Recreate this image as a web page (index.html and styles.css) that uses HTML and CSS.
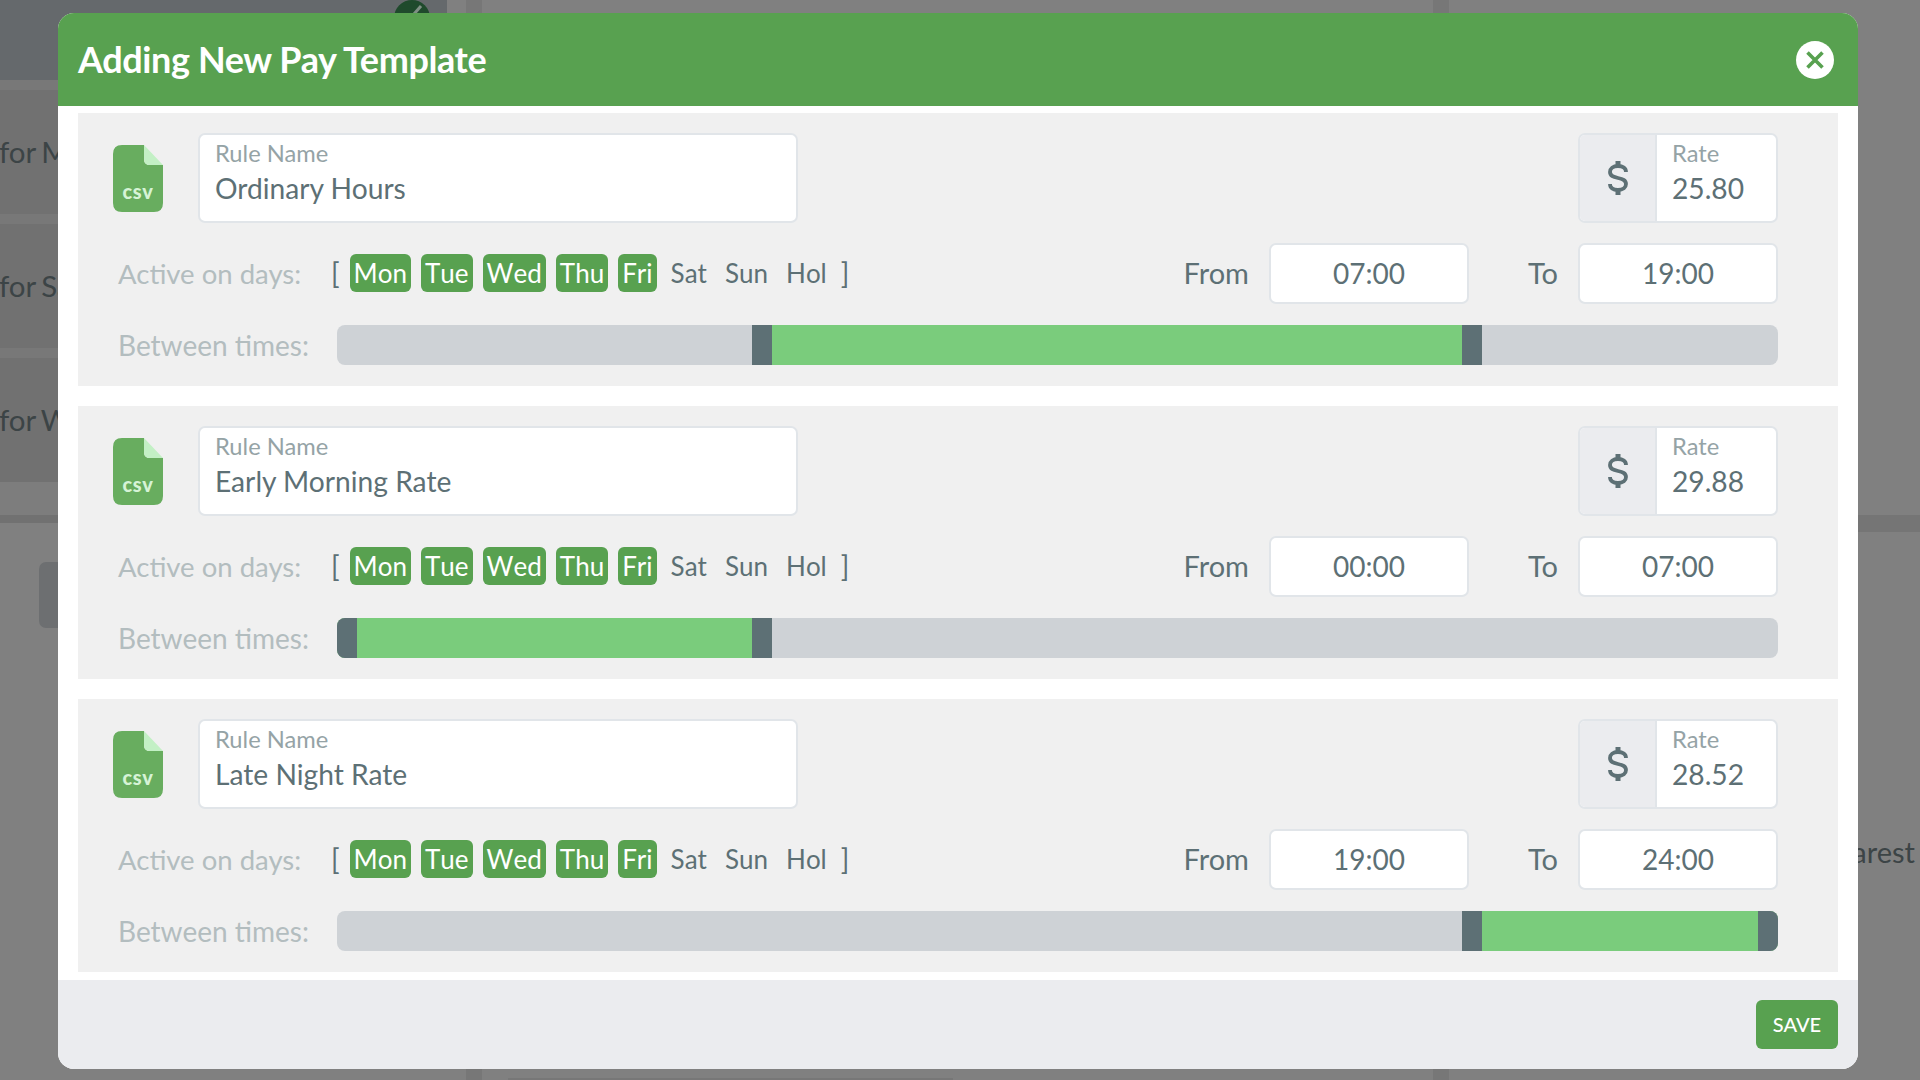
FILE: index.html
```html
<!DOCTYPE html>
<html lang="en">
<head>
  <meta charset="UTF-8" />
  <title>Adding New Pay Template</title>
  <link rel="stylesheet" href="styles.css">
</head>
<body>
  <div class="page-behind">
    <div class="behind-left">
      <div class="behind-top">
        <svg class="behind-badge" width="36" height="36" viewBox="0 0 36 36"><circle cx="18" cy="18" r="18" /><path d="M20 14 27 6" /></svg>
      </div>
      <div class="behind-sep"></div>
      <div class="behind-row">for Mon</div>
      <div class="behind-sep"></div>
      <div class="behind-row">for Sat</div>
      <div class="behind-sep"></div>
      <div class="behind-row">for Wed</div>
      <div class="behind-sep tall"></div>
      <div class="behind-line"></div>
    </div>
    <div class="behind-col c1"></div>
    <div class="behind-col c2"></div>
    <div class="behind-line right"></div>
    <div class="behind-box small"></div>
    <div class="behind-box wide"></div>
    <span class="behind-text">nearest</span>
  </div>

  <div class="modal">
    <div class="modal-header">
      <h1>Adding New Pay Template</h1>
      <div class="close-btn">
        <svg width="18" height="18" viewBox="0 0 18 18"><path d="M1.500 1.500 16.500 16.500M16.500 1.500 1.500 16.500" /></svg>
      </div>
    </div>

    <div class="modal-body">
      <div class="rule-card">
        <div class="row top-row">
          <svg class="csv-icon" width="50" height="67" viewBox="0 0 50 67">
            <path class="csv-sheet" d="M9 0H31V14Q31 20 37 20H50V58Q50 67 41 67H9Q0 67 0 58V9Q0 0 9 0Z" />
            <path class="csv-fold" d="M31 0 50 20H37Q31 20 31 14Z" />
            <text x="25" y="54" text-anchor="middle">csv</text>
          </svg>
          <div class="field name-field">
            <label>Rule Name</label>
            <div class="value">Ordinary Hours</div>
          </div>
          <div class="rate-group">
            <div class="addon">
              <svg width="24" height="36" viewBox="0 0 24 36"><path class="dollar-s" d="M20 12C20 8 17 6 12 6C7 6 4 8.500 4 12C4 16 7.500 17 12 18C16.500 19 20 20 20 24C20 27.500 17 30 12 30C7 30 4 28 4 24" /><path class="dollar-bar" d="M12 1V6M12 30V35" /></svg>
            </div>
            <div class="rate-input">
              <label>Rate</label>
              <div class="value">25.80</div>
            </div>
          </div>
        </div>
        <div class="row days-row">
          <span class="row-label active-label">Active on days:</span>
          <div class="days">
            <span class="bracket open">[</span>
            <span class="day on">Mon</span>
            <span class="day on">Tue</span>
            <span class="day on">Wed</span>
            <span class="day on">Thu</span>
            <span class="day on">Fri</span>
            <span class="day">Sat</span>
            <span class="day">Sun</span>
            <span class="day">Hol</span>
            <span class="bracket close">]</span>
          </div>
          <span class="time-label from-label">From</span>
          <div class="time-input">07:00</div>
          <span class="time-label to-label">To</span>
          <div class="time-input">19:00</div>
        </div>
        <div class="row times-row">
          <span class="row-label between-label">Between times:</span>
          <div class="time-bar"><div class="time-fill" style="--from: 7; --to: 19"></div></div>
        </div>
      </div>

      <div class="rule-card">
        <div class="row top-row">
          <svg class="csv-icon" width="50" height="67" viewBox="0 0 50 67">
            <path class="csv-sheet" d="M9 0H31V14Q31 20 37 20H50V58Q50 67 41 67H9Q0 67 0 58V9Q0 0 9 0Z" />
            <path class="csv-fold" d="M31 0 50 20H37Q31 20 31 14Z" />
            <text x="25" y="54" text-anchor="middle">csv</text>
          </svg>
          <div class="field name-field">
            <label>Rule Name</label>
            <div class="value">Early Morning Rate</div>
          </div>
          <div class="rate-group">
            <div class="addon">
              <svg width="24" height="36" viewBox="0 0 24 36"><path class="dollar-s" d="M20 12C20 8 17 6 12 6C7 6 4 8.500 4 12C4 16 7.500 17 12 18C16.500 19 20 20 20 24C20 27.500 17 30 12 30C7 30 4 28 4 24" /><path class="dollar-bar" d="M12 1V6M12 30V35" /></svg>
            </div>
            <div class="rate-input">
              <label>Rate</label>
              <div class="value">29.88</div>
            </div>
          </div>
        </div>
        <div class="row days-row">
          <span class="row-label active-label">Active on days:</span>
          <div class="days">
            <span class="bracket open">[</span>
            <span class="day on">Mon</span>
            <span class="day on">Tue</span>
            <span class="day on">Wed</span>
            <span class="day on">Thu</span>
            <span class="day on">Fri</span>
            <span class="day">Sat</span>
            <span class="day">Sun</span>
            <span class="day">Hol</span>
            <span class="bracket close">]</span>
          </div>
          <span class="time-label from-label">From</span>
          <div class="time-input">00:00</div>
          <span class="time-label to-label">To</span>
          <div class="time-input">07:00</div>
        </div>
        <div class="row times-row">
          <span class="row-label between-label">Between times:</span>
          <div class="time-bar"><div class="time-fill" style="--from: 0; --to: 7"></div></div>
        </div>
      </div>

      <div class="rule-card">
        <div class="row top-row">
          <svg class="csv-icon" width="50" height="67" viewBox="0 0 50 67">
            <path class="csv-sheet" d="M9 0H31V14Q31 20 37 20H50V58Q50 67 41 67H9Q0 67 0 58V9Q0 0 9 0Z" />
            <path class="csv-fold" d="M31 0 50 20H37Q31 20 31 14Z" />
            <text x="25" y="54" text-anchor="middle">csv</text>
          </svg>
          <div class="field name-field">
            <label>Rule Name</label>
            <div class="value">Late Night Rate</div>
          </div>
          <div class="rate-group">
            <div class="addon">
              <svg width="24" height="36" viewBox="0 0 24 36"><path class="dollar-s" d="M20 12C20 8 17 6 12 6C7 6 4 8.500 4 12C4 16 7.500 17 12 18C16.500 19 20 20 20 24C20 27.500 17 30 12 30C7 30 4 28 4 24" /><path class="dollar-bar" d="M12 1V6M12 30V35" /></svg>
            </div>
            <div class="rate-input">
              <label>Rate</label>
              <div class="value">28.52</div>
            </div>
          </div>
        </div>
        <div class="row days-row">
          <span class="row-label active-label">Active on days:</span>
          <div class="days">
            <span class="bracket open">[</span>
            <span class="day on">Mon</span>
            <span class="day on">Tue</span>
            <span class="day on">Wed</span>
            <span class="day on">Thu</span>
            <span class="day on">Fri</span>
            <span class="day">Sat</span>
            <span class="day">Sun</span>
            <span class="day">Hol</span>
            <span class="bracket close">]</span>
          </div>
          <span class="time-label from-label">From</span>
          <div class="time-input">19:00</div>
          <span class="time-label to-label">To</span>
          <div class="time-input">24:00</div>
        </div>
        <div class="row times-row">
          <span class="row-label between-label">Between times:</span>
          <div class="time-bar"><div class="time-fill" style="--from: 19; --to: 24"></div></div>
        </div>
      </div>
    </div>

    <div class="modal-footer">
      <button type="button" class="save-btn">SAVE</button>
    </div>
  </div>
</body>
</html>
```

FILE: styles.css
```css
:root {
  --verde: #58a150;
  --verde-claro: #7acc7c;
  --cinza-texto: #5d7075;
  --cinza-label: #95a3a6;
  --cinza-fraco: #b3bdbf;
  --cinza-borda: #e1e5e9;
  --cinza-rodape: #ebecef;
  --fundo-linha: #777777;
}

html, body {
  height: 100%;
}

body {
  margin: 0;
  overflow: hidden;
  position: relative;
  background-color: #808080;
  font-family: 'Lato', sans-serif;
  color: var(--cinza-texto);
}

/* page dimmed behind the modal */
.page-behind {
  position: absolute;
  inset: 0;
}

.behind-left {
  width: 447px;
  display: flex;
  flex-direction: column;
}

.behind-top {
  height: 80px;
  overflow: hidden;
  background-color: #65696c;
  display: flex;
  justify-content: flex-end;
  padding-right: 17px;
}

.behind-badge circle { fill: #1f4a2c; }

.behind-badge path {
  fill: none;
  stroke: #7f8f84;
  stroke-width: 3;
}

.behind-sep {
  height: 10px;
  background-color: #787878;
}

.behind-sep.tall {
  height: 33px;
  background-color: #7d7d7d;
}

.behind-row {
  height: 124px;
  box-sizing: border-box;
  padding-top: 44px;
  margin-left: -1px;
  background-color: #717171;
  font-size: 29.5px;
  line-height: 36px;
  word-spacing: -2px;
  color: #3c4446;
  white-space: nowrap;
}

.behind-line {
  height: 8px;
  background-color: #717171;
}

.behind-line.right {
  position: absolute;
  left: 1858px;
  right: 0;
  top: 515px;
  height: 17px;
  background-color: #757575;
}

.behind-col {
  position: absolute;
  top: 0;
  bottom: 0;
  width: 16px;
  background-color: var(--fundo-linha);
}

.c1 { left: 466px; }
.c2 { left: 1433px; }

.behind-box {
  position: absolute;
  background-color: var(--fundo-linha);
}

.behind-box.small {
  left: 39px;
  top: 562px;
  width: 40px;
  height: 66px;
  border-radius: 7px;
  background-color: #6d6f71;
}

.behind-box.wide {
  left: 508px;
  top: 1078px;
  width: 445px;
  height: 20px;
}

.behind-text {
  position: absolute;
  right: 5px;
  top: 834px;
  font-size: 29px;
  color: #3c4446;
  white-space: nowrap;
}

.modal {
  position: absolute;
  left: 58px;
  top: 13px;
  width: 1800px;
  height: 1056px;
  display: flex;
  flex-direction: column;
  background-color: white;
  border-radius: 16px;
  overflow: hidden;
}

.modal-header {
  height: 93px;
  box-sizing: border-box;
  padding: 0 24px 0 20px;
  display: flex;
  justify-content: space-between;
  align-items: center;
  background-color: var(--verde);
  color: white;
}

.modal-header h1 {
  margin: 0 0 2px;
  font-size: 36px;
  font-weight: 700;
  letter-spacing: -0.4px;
}

.close-btn {
  width: 38px;
  height: 38px;
  border-radius: 50%;
  background-color: white;
  display: flex;
  justify-content: center;
  align-items: center;
}

.close-btn svg path {
  fill: none;
  stroke: var(--verde);
  stroke-width: 3.6;
}

.modal-body {
  flex: 1;
  padding: 7px 20px 8px;
  display: flex;
  flex-direction: column;
  gap: 20px;
}

.rule-card {
  height: 273px;
  box-sizing: border-box;
  padding: 20px 60px 21px 35px;
  background-color: #f0f0f0;
  display: flex;
  flex-direction: column;
}

.row {
  display: flex;
  align-items: center;
}

.top-row {
  height: 90px;
}

.csv-icon {
  flex: none;
  margin-right: 35px;
}

.csv-sheet { fill: #68ad5f; }
.csv-fold { fill: #c3f0c5; }

.csv-icon text {
  font-family: 'Lato', sans-serif;
  font-size: 20px;
  font-weight: 900;
  letter-spacing: 0.6px;
  fill: #d6f3d6;
}

.field,
.rate-group {
  height: 90px;
  box-sizing: border-box;
  border: 2px solid var(--cinza-borda);
  border-radius: 7px;
  background-color: white;
}

.field {
  width: 600px;
  padding: 3px 15px;
}

label {
  display: block;
  font-size: 23.7px;
  line-height: 30px;
  color: var(--cinza-label);
}

.value {
  font-size: 28.2px;
  line-height: 40px;
  color: var(--cinza-texto);
}

.rate-group {
  margin-left: auto;
  width: 200px;
  display: flex;
  overflow: hidden;
}

.addon {
  width: 75px;
  flex: none;
  border-right: 2px solid var(--cinza-borda);
  background-color: var(--cinza-rodape);
  display: flex;
  justify-content: center;
  align-items: center;
}

.dollar-s {
  fill: none;
  stroke: var(--cinza-texto);
  stroke-width: 3.8;
}

.dollar-bar {
  fill: none;
  stroke: var(--cinza-texto);
  stroke-width: 5;
}

.rate-input {
  padding: 3px 15px;
}

.days-row {
  margin-top: 20px;
  height: 61px;
}

.row-label {
  font-size: 28px;
  color: var(--cinza-fraco);
}

.active-label {
  margin-left: 5px;
  width: 213px;
  font-size: 27.5px;
}

.days {
  display: flex;
  align-items: center;
  gap: 10px;
  margin-bottom: 1px;
  font-size: 26px;
  font-kerning: none;
}

.bracket { font-size: 28px; }
.bracket.open { margin-right: 0; }

.day {
  padding: 3px 4px;
  line-height: 32px;
  border-radius: 6px;
}

.day.on {
  background-color: var(--verde);
  color: white;
}

.time-label {
  margin-bottom: 2px;
  font-size: 29px;
}

.from-label {
  margin-left: auto;
  margin-right: 20px;
}

.to-label {
  margin-left: 59px;
  margin-right: 20px;
}

.time-input {
  width: 200px;
  height: 61px;
  box-sizing: border-box;
  border: 2px solid var(--cinza-borda);
  border-radius: 7px;
  background-color: white;
  text-align: center;
  font-size: 28px;
  line-height: 57px;
}

.times-row {
  margin-top: 21px;
  height: 40px;
}

.between-label {
  margin-left: 5px;
  width: 219px;
}

.time-bar {
  flex: 1;
  height: 40px;
  position: relative;
  border-radius: 8px;
  background-color: #ced2d6;
  overflow: hidden;
}

/* handles are 20px wide and sit inside the track */
.time-fill {
  position: absolute;
  top: 0;
  bottom: 0;
  left: calc((100% - 19.5px) * var(--from) / 24);
  width: calc((100% - 19.5px) * (var(--to) - var(--from)) / 24 + 20px);
  box-sizing: border-box;
  border-left: 20px solid var(--cinza-texto);
  border-right: 20px solid var(--cinza-texto);
  background-color: var(--verde-claro);
}

.modal-footer {
  height: 89px;
  box-sizing: border-box;
  padding: 20px;
  display: flex;
  justify-content: flex-end;
  background-color: var(--cinza-rodape);
}

.save-btn {
  width: 82px;
  height: 49px;
  padding: 0 0 2px;
  border: none;
  border-radius: 6px;
  background-color: var(--verde);
  color: white;
  font-family: 'Lato', sans-serif;
  font-size: 20px;
  font-weight: 500;
}
```
